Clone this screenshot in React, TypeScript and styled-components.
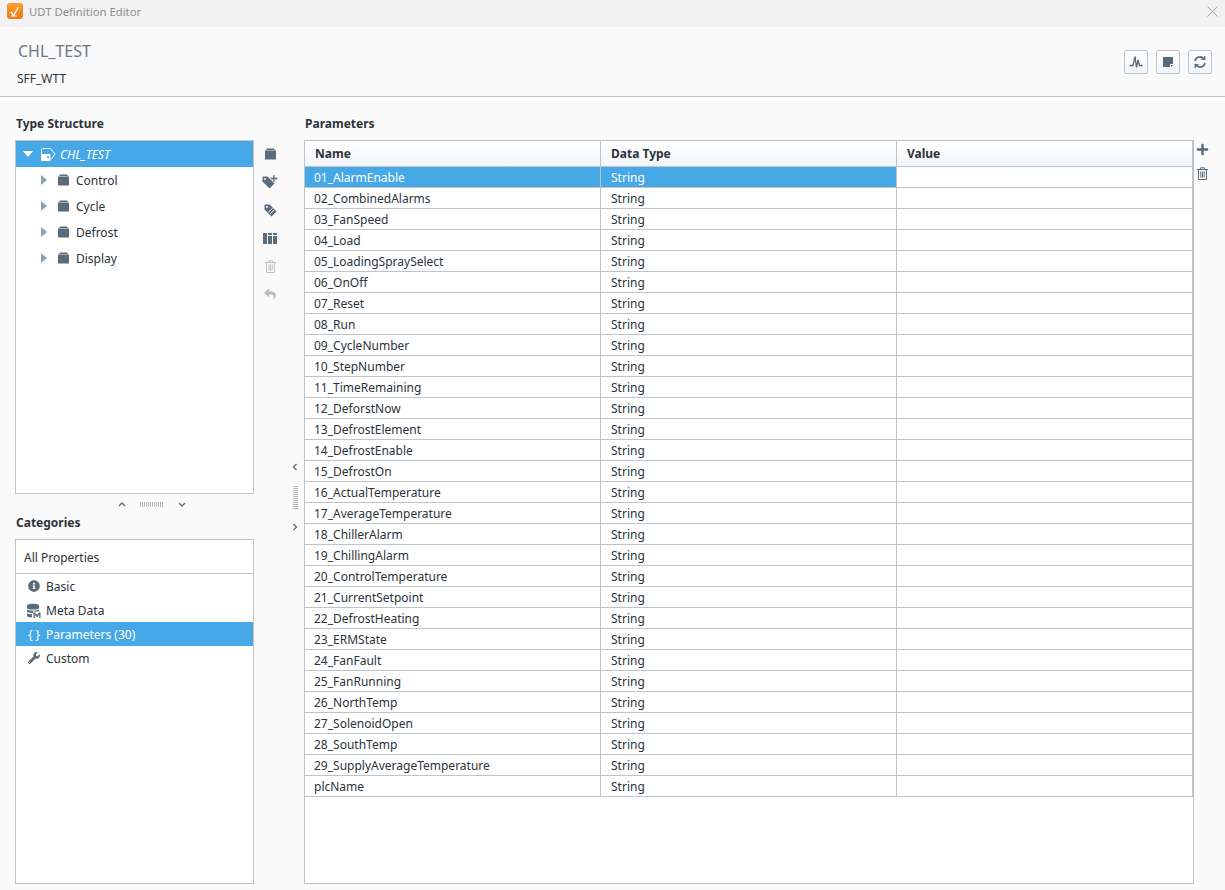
import React from 'react';
import styled, { createGlobalStyle } from 'styled-components';
import { FaInfoCircle, FaWrench, FaPlus, FaReply } from 'react-icons/fa';

const names = [
  '01_AlarmEnable', '02_CombinedAlarms', '03_FanSpeed', '04_Load', '05_LoadingSpraySelect',
  '06_OnOff', '07_Reset', '08_Run', '09_CycleNumber', '10_StepNumber', '11_TimeRemaining',
  '12_DeforstNow', '13_DefrostElement', '14_DefrostEnable', '15_DefrostOn', '16_ActualTemperature',
  '17_AverageTemperature', '18_ChillerAlarm', '19_ChillingAlarm', '20_ControlTemperature',
  '21_CurrentSetpoint', '22_DefrostHeating', '23_ERMState', '24_FanFault', '25_FanRunning',
  '26_NorthTemp', '27_SolenoidOpen', '28_SouthTemp', '29_SupplyAverageTemperature', 'plcName',
];

const iconColor = '#5a6b7b';
const lineColor = '#c0c4c8';
const selected = '#46a8e6';

const GlobalStyle = createGlobalStyle`
  html, body { margin: 0; padding: 0; background: #fafafa; }
  body { font-family: "Noto Sans", "Open Sans", sans-serif; font-size: 12px; color: #2c333a; }
`;

const Page = styled.div`
  width: 1225px;
  height: 890px;
  overflow: hidden;
  display: flex;
  flex-direction: column;
`;

const TitleBar = styled.div`
  height: 27px;
  background: #f2f2f2;
  display: flex;
  align-items: center;
  padding: 0 7px 5px 7px;
  box-sizing: border-box;
  color: #8a8f94;
  font-size: 11.3px;
  gap: 6px;
`;

const AppIcon = styled.div`
  width: 16px;
  height: 16px;
  border-radius: 3px;
  background: linear-gradient(#fb9d35, #ef7d12);
  display: flex;
  align-items: center;
  justify-content: center;
`;

const CloseBtn = styled.div`
  margin-left: auto;
  display: flex;
`;

const Header = styled.div`
  height: 70px;
  box-sizing: border-box;
  border-bottom: 1px solid ${lineColor};
  display: flex;
  justify-content: space-between;
  padding: 14px 13px 0 17px;
`;

const Title = styled.div`
  font-size: 16px;
  line-height: 20px;
  color: #6b7885;
  margin-left: 1px;
`;

const Subtitle = styled.div`
  font-size: 12px;
  line-height: 16px;
  margin-top: 10px;
  color: #2c333a;
`;

const HeaderTools = styled.div`
  display: flex;
  gap: 8px;
  padding-top: 9px;
`;

const ToolBtn = styled.div`
  width: 24px;
  height: 24px;
  box-sizing: border-box;
  border: 1px solid ${lineColor};
  border-radius: 2px;
  background: linear-gradient(#ffffff, #f2f5f8);
  display: flex;
  align-items: center;
  justify-content: center;
`;

const Body = styled.div`
  flex: 1;
  display: flex;
  padding: 18px 0 6px 15px;
  min-height: 0;
`;

const LeftColumn = styled.div`
  width: 239px;
  display: flex;
  flex-direction: column;
`;

const SectionLabel = styled.div`
  font-weight: 700;
  font-size: 12px;
  line-height: 18px;
  height: 25px;
  color: #2c333a;
  padding-left: 1px;
`;

const TreeBox = styled.div`
  height: 354px;
  box-sizing: border-box;
  background: #fff;
  border: 1px solid ${lineColor};
`;

const TreeRow = styled.div<{ $active?: boolean }>`
  height: 26px;
  box-sizing: border-box;
  display: flex;
  align-items: center;
  padding-left: ${p => (p.$active ? 7 : 25)}px;
  background: ${p => (p.$active ? selected : 'transparent')};
  color: ${p => (p.$active ? '#fff' : '#2c333a')};
  font-style: ${p => (p.$active ? 'italic' : 'normal')};
`;

const RootArrow = styled.span`
  width: 0;
  height: 0;
  border-left: 5px solid transparent;
  border-right: 5px solid transparent;
  border-top: 6px solid #fff;
  margin-right: 8px;
`;

const Arrow = styled.span`
  width: 0;
  height: 0;
  border-top: 5px solid transparent;
  border-bottom: 5px solid transparent;
  border-left: 6px solid #8ba0b2;
  margin-right: 10px;
`;

const Splitter = styled.div`
  height: 20px;
  box-sizing: border-box;
  display: flex;
  align-items: center;
  justify-content: center;
  gap: 14px;
  padding-left: 35px;
`;

const GripH = styled.div`
  width: 24px;
  height: 5px;
  background: repeating-linear-gradient(90deg, #b4b8bc 0 1px, transparent 1px 2px);
`;

const CategoryBox = styled.div`
  height: 345px;
  box-sizing: border-box;
  background: #fff;
  border: 1px solid ${lineColor};
`;

const AllRow = styled.div`
  height: 34px;
  box-sizing: border-box;
  border-bottom: 1px solid ${lineColor};
  display: flex;
  align-items: center;
  padding: 2px 0 0 8px;
`;

const CatRow = styled.div<{ $active?: boolean }>`
  height: 24px;
  box-sizing: border-box;
  display: flex;
  align-items: center;
  padding-left: 12px;
  gap: 6px;
  background: ${p => (p.$active ? selected : 'transparent')};
  color: ${p => (p.$active ? '#fff' : '#2c333a')};
`;

const CatIcon = styled.span`
  width: 12px;
  display: flex;
  justify-content: center;
  color: ${iconColor};
  font-size: 12px;
`;

const Braces = styled(CatIcon)`
  color: #fff;
  font-weight: 400;
  font-size: 12px;
  white-space: nowrap;
`;

const SideTools = styled.div`
  width: 32px;
  padding-top: 25px;
  display: flex;
  flex-direction: column;
  align-items: center;
`;

const SideTool = styled.div<{ $disabled?: boolean }>`
  height: 28px;
  display: flex;
  align-items: center;
  justify-content: center;
  color: ${p => (p.$disabled ? '#b8c0c8' : iconColor)};
  font-size: 12px;
`;

const Divider = styled.div`
  width: 18px;
  display: flex;
  flex-direction: column;
  align-items: center;
  justify-content: center;
  gap: 14px;
  height: 166px;
  margin-top: 299px;
`;

const GripV = styled.div`
  width: 5px;
  height: 24px;
  background: repeating-linear-gradient(0deg, #b4b8bc 0 1px, transparent 1px 2px);
`;

const RightColumn = styled.div`
  width: 890px;
  display: flex;
  flex-direction: column;
`;

const TableBox = styled.div`
  height: 744px;
  box-sizing: border-box;
  background: #fff;
  border: 1px solid ${lineColor};
`;

const Table = styled.div`
  display: grid;
  grid-template-columns: 296px 296px 296px;
`;

const HeadCell = styled.div`
  height: 26px;
  box-sizing: border-box;
  border-bottom: 1px solid ${lineColor};
  border-right: 1px solid ${lineColor};
  background: linear-gradient(#ffffff, #f2f5f8);
  font-weight: 700;
  display: flex;
  align-items: center;
  padding-left: 10px;
`;

const Cell = styled.div<{ $active?: boolean; $indent?: number }>`
  height: 21px;
  box-sizing: border-box;
  border-bottom: 1px solid ${lineColor};
  border-right: 1px solid ${lineColor};
  background: ${p => (p.$active ? selected : '#fff')};
  color: ${p => (p.$active ? '#fff' : '#2c333a')};
  display: flex;
  align-items: center;
  padding-left: ${p => p.$indent ?? 9}px;
  white-space: nowrap;
`;

const TableTools = styled.div`
  width: 32px;
  padding-top: 22px;
  display: flex;
  flex-direction: column;
  align-items: center;
  margin-left: -8px;
`;

const TableTool = styled.div`
  height: 24px;
  display: flex;
  align-items: center;
  justify-content: center;
  color: ${iconColor};
  font-size: 13px;
`;

const TreeLabel = styled.span`
  margin-left: 6px;
`;

const RootLabel = styled.span`
  margin-left: 4px;
`;

const Folder = ({ color = iconColor }: { color?: string }) => (
  <svg width="13" height="12" viewBox="0 0 13 12">
    <path d="M3 .5h7l1 1.500H2z" fill={color} />
    <path d="M1 2.800h11V11a.6.6 0 0 1-.6.6H1.600a.6.6 0 0 1-.6-.6z" fill={color} />
    <path d="M1 2.300h11v.8H1z" fill={color} opacity=".55" />
  </svg>
);

const Trash = ({ color = iconColor }: { color?: string }) => (
  <svg width="11" height="13" viewBox="0 0 11 13" fill="none" stroke={color} strokeWidth="1">
    <path d="M0 2.5h11M3.5 2.5V.8h4v1.700" />
    <path d="M1.500 2.500V12.500h8V2.500" />
    <path d="M3.800 4.500v6M5.500 4.500v6M7.200 4.500v6" />
  </svg>
);

const Chevron = ({ dir, size = 8 }: { dir: 'up' | 'down' | 'left' | 'right'; size?: number }) => {
  const d = { up: 'M1 6l3-3 3 3', down: 'M1 3l3 3 3-3', left: 'M5.500 1l-3 3 3 3', right: 'M2.500 1l3 3-3 3' }[dir];
  return (
    <svg width={size} height={size} viewBox="0 0 8 8" fill="none" stroke="#5a6b7b" strokeWidth="1.300">
      <path d={d} />
    </svg>
  );
};

const TypeIcon = () => (
  <svg width="15" height="13" viewBox="0 0 15 13">
    <path d="M.5 6V1.300A.8.8 0 0 1 1.300 .5H9.500L14 6l-4 5.500" fill="none" stroke="#fff" strokeWidth="1" />
    <rect x="0" y="6" width="9.500" height="7" rx=".6" fill="#fff" />
    <circle cx="7" cy="9" r="1.100" fill={selected} />
  </svg>
);

const TagShape = () => (
  <path d="M.5 1.500Q.5 .5 1.500 .5H5.500L12.500 7.500 7.500 12.500 .5 5.500z" fill={iconColor} />
);

const Tree = ({ label }: { label: string }) => (
  <TreeRow>
    <Arrow />
    <Folder />
    <TreeLabel>{label}</TreeLabel>
  </TreeRow>
);

export default function App() {
  return (
    <Page>
      <GlobalStyle />
      <TitleBar>
        <AppIcon>
          <svg width="10" height="11" viewBox="0 0 10 11" fill="none" stroke="#fff" strokeWidth="1.300">
            <path d="M1 6l2.500 3.500L8.500 1" />
            <path d="M1 10h6" strokeWidth="1" />
          </svg>
        </AppIcon>
        UDT Definition Editor
        <CloseBtn>
          <svg width="11" height="11" viewBox="0 0 11 11" fill="none" stroke="#a0a4a8" strokeWidth="1">
            <path d="M.5 .5l10 10M10.500 .5l-10 10" />
          </svg>
        </CloseBtn>
      </TitleBar>
      <Header>
        <div>
          <Title>CHL_TEST</Title>
          <Subtitle>SFF_WTT</Subtitle>
        </div>
        <HeaderTools>
          <ToolBtn>
            <svg width="14" height="14" viewBox="0 0 14 14" fill="none" stroke={iconColor} strokeWidth="1.300">
              <path d="M.5 10.500H4L6 1.500l1.500 11L9 5l1.500 5.500h3" />
            </svg>
          </ToolBtn>
          <ToolBtn>
            <svg width="12" height="12" viewBox="0 0 12 12">
              <path d="M1 1h10v7H8v3H1z" fill={iconColor} />
              <path d="M9 9h2L9 11z" fill={iconColor} />
            </svg>
          </ToolBtn>
          <ToolBtn>
            <svg width="14" height="14" viewBox="0 0 14 14" fill="none" stroke={iconColor} strokeWidth="1.600">
              <path d="M2 6a5 5 0 0 1 9-2" />
              <path d="M12 8a5 5 0 0 1-9 2" />
              <path d="M11.800 1v3.300H8.500M2.200 13V9.700h3.300" strokeWidth="1.300" />
            </svg>
          </ToolBtn>
        </HeaderTools>
      </Header>
      <Body>
        <LeftColumn>
          <SectionLabel>Type Structure</SectionLabel>
          <TreeBox>
            <TreeRow $active>
              <RootArrow />
              <TypeIcon />
              <RootLabel>CHL_TEST</RootLabel>
            </TreeRow>
            <Tree label="Control" />
            <Tree label="Cycle" />
            <Tree label="Defrost" />
            <Tree label="Display" />
          </TreeBox>
          <Splitter>
            <Chevron dir="up" />
            <GripH />
            <Chevron dir="down" />
          </Splitter>
          <SectionLabel>Categories</SectionLabel>
          <CategoryBox>
            <AllRow>All Properties</AllRow>
            <CatRow>
              <CatIcon><FaInfoCircle /></CatIcon>
              Basic
            </CatRow>
            <CatRow>
              <CatIcon>
                <svg width="14" height="15" viewBox="0 0 14 15" style={{ flexShrink: 0 }}>
                  <path d="M0 2.500C0 0 12 0 12 2.500V5C12 7 0 7 0 5z" fill={iconColor} />
                  <path d="M0 6.500C2 8 10 8 12 6.500V8.500H6V10C3 10 1 9.500 0 8.800z" fill={iconColor} />
                  <path d="M0 10.200C1 11 3 11.300 5 11.300V14.500C2.500 14.500 0 14 0 12.800z" fill={iconColor} />
                  <path d="M6.500 15V9.500h1.700L10 12 11.800 9.500H13.500V15h-1.300v-3.300L10 14.500 7.800 11.700V15z" fill={iconColor} />
                </svg>
              </CatIcon>
              Meta Data
            </CatRow>
            <CatRow $active>
              <Braces>{'{ }'}</Braces>
              Parameters (30)
            </CatRow>
            <CatRow>
              <CatIcon><FaWrench /></CatIcon>
              Custom
            </CatRow>
          </CategoryBox>
        </LeftColumn>
        <SideTools>
          <SideTool><Folder /></SideTool>
          <SideTool>
            <svg width="16" height="14" viewBox="0 0 16 14">
              <g transform="translate(0 1)">
                <TagShape />
                <circle cx="3" cy="3" r="1" fill="#fafafa" />
              </g>
              <path d="M11 0h1.800v2.600H15.500v1.800H12.800V7H11V4.400H8.400V2.600H11z" fill={iconColor} stroke="#fafafa" strokeWidth=".4" />
            </svg>
          </SideTool>
          <SideTool>
            <svg width="13" height="13" viewBox="0 0 13 13">
              <TagShape />
              <circle cx="3" cy="3" r="1" fill="#fafafa" />
              <path d="M4.300 8.300L8.300 4.300M6 10L10 6" stroke="#fafafa" strokeWidth="1" />
            </svg>
          </SideTool>
          <SideTool>
            <svg width="14" height="11" viewBox="0 0 14 11">
              <path d="M0 0h4v11H0zM5 0h4v2H5zM10 0h4v2h-4zM5 3h4v8H5zM10 3h4v8h-4z" fill={iconColor} />
            </svg>
          </SideTool>
          <SideTool $disabled><Trash color="#b8c0c8" /></SideTool>
          <SideTool $disabled><FaReply /></SideTool>
        </SideTools>
        <Divider>
          <Chevron dir="left" />
          <GripV />
          <Chevron dir="right" />
        </Divider>
        <RightColumn>
          <SectionLabel>Parameters</SectionLabel>
          <TableBox>
            <Table>
              <HeadCell>Name</HeadCell>
              <HeadCell>Data Type</HeadCell>
              <HeadCell>Value</HeadCell>
              {names.map((name, i) => (
                <React.Fragment key={name}>
                  <Cell $active={i === 0}>{name}</Cell>
                  <Cell $active={i === 0} $indent={10}>String</Cell>
                  <Cell />
                </React.Fragment>
              ))}
            </Table>
          </TableBox>
        </RightColumn>
        <TableTools>
          <TableTool><FaPlus /></TableTool>
          <TableTool><Trash /></TableTool>
        </TableTools>
      </Body>
    </Page>
  );
}
